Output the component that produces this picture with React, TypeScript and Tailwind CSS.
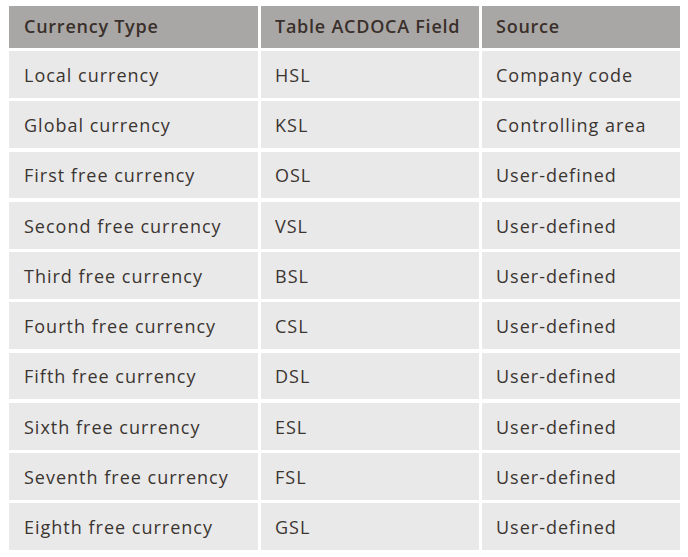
import React from "react";

const rows: [string, string, string][] = [
  ["Local currency", "HSL", "Company code"],
  ["Global currency", "KSL", "Controlling area"],
  ["First free currency", "OSL", "User-defined"],
  ["Second free currency", "VSL", "User-defined"],
  ["Third free currency", "BSL", "User-defined"],
  ["Fourth free currency", "CSL", "User-defined"],
  ["Fifth free currency", "DSL", "User-defined"],
  ["Sixth free currency", "ESL", "User-defined"],
  ["Seventh free currency", "FSL", "User-defined"],
  ["Eighth free currency", "GSL", "User-defined"],
];

export default function App() {
  return (
    <div
      className="w-[688px] h-[557px] bg-white pt-[6px] pl-[9px]"
      style={{ fontFamily: '"Open Sans", "Noto Sans", sans-serif' }}
    >
      <div className="flex flex-col gap-[3.4px] w-[671px]">
        <div className="grid grid-cols-[249px_218px_198px] gap-x-[3px] h-[41.7px] text-[18px] font-semibold tracking-[0.75px] text-[#3a2f2a]">
          <div className="bg-[#a9a7a5] flex items-center pl-[15px]">Currency Type</div>
          <div className="bg-[#a9a7a5] flex items-center pl-[14px]">Table ACDOCA Field</div>
          <div className="bg-[#a9a7a5] flex items-center pl-[14px]">Source</div>
        </div>
        <div className="flex flex-col gap-[3.5px]">
          {rows.map((r) => (
            <div
              key={r[0]}
              className="grid grid-cols-[249px_218px_198px] gap-x-[3px] h-[46.75px] text-[18px] tracking-[1px] text-[#3b3531]"
            >
              <div className="bg-[#e9e9e9] flex items-center pl-[15px] pt-[2px]">{r[0]}</div>
              <div className="bg-[#e9e9e9] flex items-center pl-[14px] pt-[2px]">{r[1]}</div>
              <div className="bg-[#e9e9e9] flex items-center pl-[14px] pt-[2px]">{r[2]}</div>
            </div>
          ))}
        </div>
      </div>
    </div>
  );
}
